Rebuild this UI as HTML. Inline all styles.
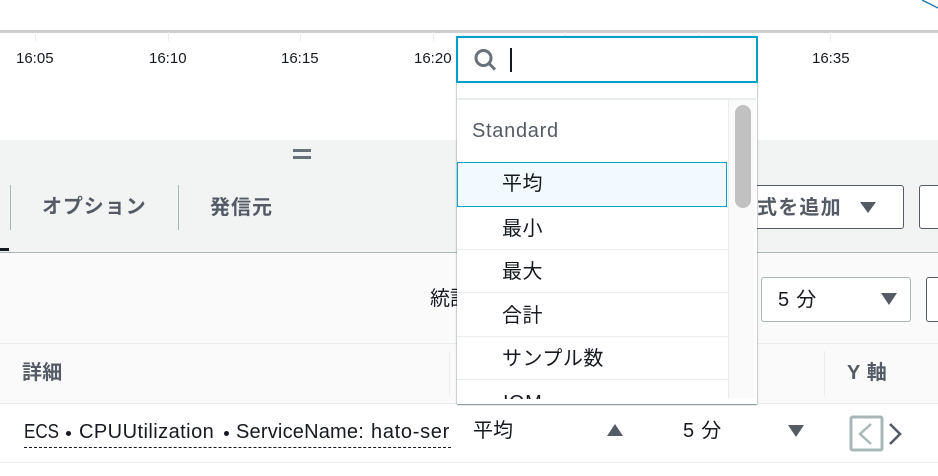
<!DOCTYPE html>
<html lang="ja"><head><meta charset="utf-8">
<style>
html,body{margin:0;padding:0;background:#fff}
#p{position:relative;width:938px;height:476px;overflow:hidden;background:#fff;font-family:"Liberation Sans","Noto Sans CJK JP",sans-serif;color:#16191f}
#p div{position:absolute}
.t{white-space:nowrap;line-height:1}
.tick{top:32px;width:1px;height:9px;background:#eaeded}
.lb{top:52px;font-size:15px;letter-spacing:0;color:#16191f;white-space:nowrap;line-height:14px}
.it{left:502px;font-size:20px;letter-spacing:.5px;color:#16191f;white-space:nowrap;line-height:24px}
.sep{left:457px;width:271px;height:1px;background:#eaeded}
.tri{width:0;height:0;border-left:8px solid transparent;border-right:8px solid transparent}
.b{font-weight:700;color:#545b64}
.r{top:420px;font-size:20px;line-height:24px;white-space:nowrap;color:#16191f}
.dot{top:431px;width:5px;height:5px;border-radius:50%;background:#16191f}
</style></head><body>
<div id="p">
<!-- chart -->
<svg style="position:absolute;left:915px;top:0" width="23" height="12"><path d="M7 0 L23 8" stroke="#1f77b4" stroke-width="1.4" fill="none"/></svg>
<div style="left:0;top:30px;width:938px;height:3px;background:#cfcfcf"></div>
<div class="tick" style="left:35px"></div><div class="tick" style="left:168px"></div><div class="tick" style="left:300px"></div><div class="tick" style="left:433px"></div><div class="tick" style="left:565px"></div><div class="tick" style="left:698px"></div><div class="tick" style="left:830px"></div>
<div class="lb" style="left:16px">16:05</div><div class="lb" style="left:149px">16:10</div><div class="lb" style="left:281px">16:15</div><div class="lb" style="left:414px">16:20</div><div class="lb" style="left:812px">16:35</div>

<!-- tab band -->
<div style="left:0;top:140px;width:938px;height:112px;background:#f2f3f3"></div>
<div style="left:293px;top:149px;width:18px;height:3px;background:#687078"></div>
<div style="left:293px;top:156px;width:18px;height:3px;background:#687078"></div>
<div style="left:10px;top:185px;width:1px;height:45px;background:#aab7b8"></div>
<div style="left:178px;top:185px;width:1px;height:45px;background:#aab7b8"></div>
<div class="t b" style="left:42px;top:197px;font-size:20px;letter-spacing:.9px">オプション</div>
<div class="t b" style="left:210px;top:198px;font-size:20px;letter-spacing:1px">発信元</div>
<div style="left:0;top:248px;width:9px;height:3px;background:#16191f"></div>
<div style="left:0;top:252px;width:938px;height:1px;background:#aab7b8"></div>

<div style="left:700px;top:185px;width:204px;height:44px;box-sizing:border-box;border:1px solid #545b64;border-radius:3px;background:#fff"></div>
<div class="t b" style="left:757px;top:198px;font-size:20px;letter-spacing:1.2px">式を追加</div>
<div class="tri" style="left:860px;top:202px;border-top:11px solid #545b64"></div>
<div style="left:919px;top:185px;width:40px;height:44px;box-sizing:border-box;border:1px solid #545b64;border-radius:3px;background:#fff"></div>

<!-- toolbar -->
<div style="left:0;top:253px;width:938px;height:90px;background:#fafafa"></div>
<div class="t" style="left:430px;top:289px;font-size:20px;color:#16191f">統計</div>
<div style="left:761px;top:277px;width:150px;height:45px;box-sizing:border-box;border:1px solid #aab7b8;border-radius:3px;background:#fff"></div>
<div class="t" style="left:778px;top:290px;font-size:20px;letter-spacing:.8px;color:#16191f">5 分</div>
<div class="tri" style="left:881px;top:293px;border-top:12px solid #545b64"></div>
<div style="left:926px;top:277px;width:40px;height:45px;box-sizing:border-box;border:1px solid #545b64;border-radius:3px;background:#fff"></div>

<!-- table header -->
<div style="left:0;top:343px;width:938px;height:1px;background:#eaeded"></div>
<div style="left:0;top:344px;width:938px;height:59px;background:#fafafa"></div>
<div style="left:0;top:403px;width:938px;height:1px;background:#eaeded"></div>
<div class="t b" style="left:22px;top:363px;font-size:20px;letter-spacing:.3px">詳細</div>
<div style="left:449px;top:351px;width:1px;height:45px;background:#eaeded"></div>
<div style="left:824px;top:351px;width:1px;height:45px;background:#eaeded"></div>
<div class="t b" style="left:847px;top:363px;font-size:20px;letter-spacing:.6px">Y 軸</div>

<!-- row -->
<div class="r" style="left:24px;transform:scaleX(.85);transform-origin:0 0">ECS</div>
<div class="dot" style="left:66px"></div>
<div class="r" style="left:79px;letter-spacing:.45px">CPUUtilization</div>
<div class="dot" style="left:224px"></div>
<div class="r" style="left:236px;letter-spacing:.2px">ServiceName:</div>
<div class="r" style="left:371px;letter-spacing:.7px">hato-ser</div>
<div style="left:24px;top:447px;width:427px;height:0;border-top:1px dashed #16191f"></div>
<div class="t" style="left:473px;top:421px;font-size:20px;color:#16191f">平均</div>
<div class="tri" style="left:607px;top:424px;border-bottom:12px solid #545b64"></div>
<div class="t" style="left:683px;top:421px;font-size:20px;letter-spacing:.8px;color:#16191f">5 分</div>
<div class="tri" style="left:788px;top:425px;border-top:12px solid #545b64"></div>
<svg style="position:absolute;left:849px;top:415px" width="56" height="37" fill="none">
<rect x="2" y="2" width="31" height="33" rx="1.5" stroke="#aab7b8" stroke-width="3" fill="#fff"/>
<path d="M22 9 L11 19 L22 29" stroke="#aab7b8" stroke-width="2.4"/>
<path d="M41 9 L51 19 L41 29" stroke="#545b64" stroke-width="2.6"/>
</svg>
<div style="left:0;top:462px;width:938px;height:1px;background:#eaeded"></div>

<!-- dropdown -->
<div style="left:457px;top:36px;width:300px;height:368px;background:#fff;box-shadow:0 1px 1px 0 rgba(0,28,36,.5),1px 0 1px 0 rgba(0,28,36,.12),-1px 0 1px 0 rgba(0,28,36,.12)"></div>
<div style="left:456px;top:36px;width:302px;height:47px;box-sizing:border-box;border:2px solid #00a1c9;background:#fff"></div>
<svg style="position:absolute;left:472px;top:47px" width="26" height="26" fill="none" stroke="#687078" stroke-width="3"><circle cx="11.5" cy="11" r="7.5"/><path d="M17 16.5 L23 22.5"/></svg>
<div style="left:510px;top:48px;width:2px;height:24px;background:#16191f"></div>
<div style="left:457px;top:98px;width:299px;height:2px;background:#eaeded"></div>
<div style="left:728px;top:100px;width:27px;height:298px;background:#fafafa;border-left:1px solid #eaeded;box-sizing:border-box"></div>
<div style="left:735px;top:105px;width:16px;height:103px;border-radius:8px;background:#c1c1c1"></div>
<div class="t" style="left:472px;top:121px;font-size:20px;letter-spacing:.7px;color:#545b64">Standard</div>
<div style="left:457px;top:162px;width:270px;height:45px;box-sizing:border-box;border:1px solid #00a1c9;background:#f1faff"></div>
<div class="it" style="top:172px">平均</div>
<div class="it" style="top:217px">最小</div><div class="sep" style="top:249px"></div>
<div class="it" style="top:260px">最大</div><div class="sep" style="top:292px"></div>
<div class="it" style="top:304px">合計</div><div class="sep" style="top:336px"></div>
<div class="it" style="top:347px">サンプル数</div><div class="sep" style="top:379px"></div>
<div style="left:457px;top:380px;width:270px;height:19px;overflow:hidden"><div class="it" style="left:46px;top:11px">IQM</div></div>
</div>
</body></html>
